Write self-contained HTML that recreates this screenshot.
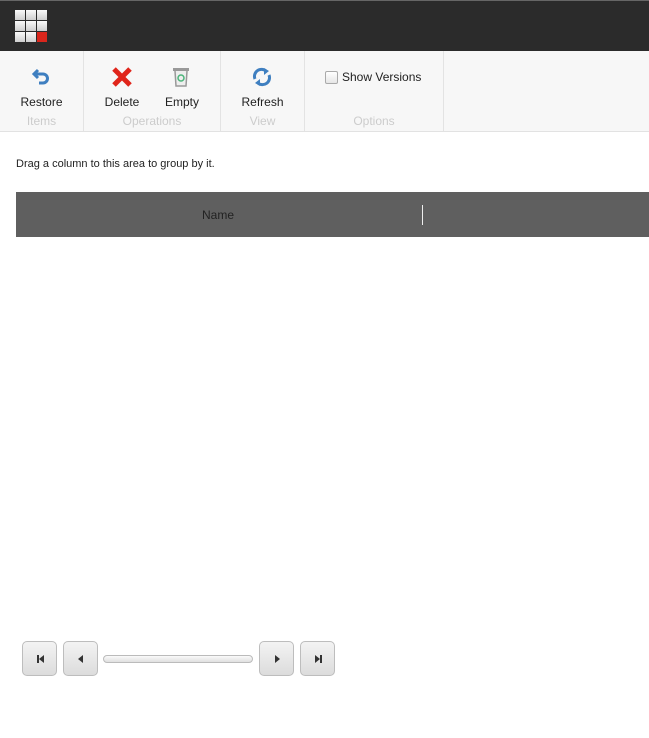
<!DOCTYPE html>
<html><head><style>
body{margin:0;width:649px;height:738px;background:#fff;font-family:"Liberation Sans",sans-serif;position:relative;overflow:hidden;font-size:12px;color:#222}
.top{position:absolute;left:0;top:0;width:649px;height:51px;background:#2b2b2b;border-top:1px solid #666;box-sizing:border-box}
.cell{position:absolute;width:10px;height:10px;background:linear-gradient(#fafafa,#cfcfcf)}
.tb{position:absolute;left:0;top:51px;width:649px;height:80px;background:#f7f7f7;border-bottom:1px solid #e2e2e2}
.sep{position:absolute;top:0;width:1px;height:80px;background:#e3e3e3}
.lbl{position:absolute;font-size:12px;color:#222;text-align:center}
.grp{position:absolute;top:63px;font-size:12px;color:#ccc;text-align:center}
.btn{position:absolute;top:641px;width:35px;height:35px;border:1px solid #bdbdbd;border-radius:5px;background:linear-gradient(#f3f3f3,#dcdcdc);box-sizing:border-box}
</style></head><body>
<div class="top">
<div class="cell" style="left:15px;top:9px"></div><div class="cell" style="left:26px;top:9px"></div><div class="cell" style="left:37px;top:9px"></div>
<div class="cell" style="left:15px;top:20px"></div><div class="cell" style="left:26px;top:20px"></div><div class="cell" style="left:37px;top:20px"></div>
<div class="cell" style="left:15px;top:31px"></div><div class="cell" style="left:26px;top:31px"></div><div class="cell" style="left:37px;top:31px;background:#d9261c"></div>
</div>
<div class="tb">
<div class="sep" style="left:83px"></div><div class="sep" style="left:220px"></div><div class="sep" style="left:304px"></div><div class="sep" style="left:443px"></div>
<svg style="position:absolute;left:32px;top:16px" width="20" height="18" viewBox="0 0 20 18"><path d="M6 3 L2 7 L6 11" fill="none" stroke="#3f7fc0" stroke-width="3"/><path d="M3 7 H11 A4.5 4.5 0 0 1 11 16 H7" fill="none" stroke="#3f7fc0" stroke-width="3"/></svg>
<div class="lbl" style="left:10px;width:63px;top:44px">Restore</div>
<div class="grp" style="left:10px;width:63px">Items</div>
<svg style="position:absolute;left:111px;top:16px" width="22" height="20" viewBox="0 0 22 20"><path d="M3 2 L19 18 M19 2 L3 18" stroke="#e0251b" stroke-width="5"/></svg>
<div class="lbl" style="left:98px;width:48px;top:44px">Delete</div>
<svg style="position:absolute;left:172px;top:16px" width="18" height="20" viewBox="0 0 18 20"><rect x="1" y="1" width="16" height="3" fill="#999"/><path d="M3 4 L4 19 H14 L15 4" fill="#eee" stroke="#999" stroke-width="1.5"/><circle cx="9" cy="11" r="3" fill="none" stroke="#4bb57a" stroke-width="1.5"/></svg>
<div class="lbl" style="left:158px;width:48px;top:44px">Empty</div>
<div class="grp" style="left:84px;width:136px">Operations</div>
<svg style="position:absolute;left:251px;top:16px" width="22" height="20" viewBox="0 0 22 20"><path d="M4 12 A7 7 0 0 1 15 4" fill="none" stroke="#3f7fc0" stroke-width="3"/><path d="M13 1 L18 4 L13 8Z" fill="#3f7fc0"/><path d="M18 8 A7 7 0 0 1 7 16" fill="none" stroke="#3f7fc0" stroke-width="3"/><path d="M9 12 L4 16 L9 19Z" fill="#3f7fc0"/></svg>
<div class="lbl" style="left:221px;width:83px;top:44px">Refresh</div>
<div class="grp" style="left:221px;width:83px">View</div>
<div style="position:absolute;left:325px;top:20px;width:11px;height:11px;border:1px solid #aaa;border-radius:2px;background:linear-gradient(#fff,#e6e6e6)"></div>
<div class="lbl" style="left:342px;top:19px">Show Versions</div>
<div class="grp" style="left:305px;width:138px">Options</div>
</div>
<div style="position:absolute;left:16px;top:158px;font-size:11px">Drag a column to this area to group by it.</div>
<div style="position:absolute;left:16px;top:192px;width:633px;height:45px;background:#5f5f5f"></div>
<div style="position:absolute;left:202px;top:208px;font-size:12px;color:#222">Name</div>
<div style="position:absolute;left:422px;top:205px;width:1px;height:20px;background:#eee"></div>
<div class="btn" style="left:22px"><svg width="35" height="35"><rect x="14" y="13" width="2" height="8" fill="#333"/><path d="M21 13 L16 17 L21 21Z" fill="#333"/></svg></div>
<div class="btn" style="left:63px"><svg width="35" height="35"><path d="M19 13 L14 17 L19 21Z" fill="#333"/></svg></div>
<div style="position:absolute;left:103px;top:655px;width:148px;height:6px;border:1px solid #bbb;border-radius:4px;background:linear-gradient(#fafafa,#e0e0e0)"></div>
<div class="btn" style="left:259px"><svg width="35" height="35"><path d="M15 13 L20 17 L15 21Z" fill="#333"/></svg></div>
<div class="btn" style="left:300px"><svg width="35" height="35"><path d="M14 13 L19 17 L14 21Z" fill="#333"/><rect x="19" y="13" width="2" height="8" fill="#333"/></svg></div>
</body></html>
